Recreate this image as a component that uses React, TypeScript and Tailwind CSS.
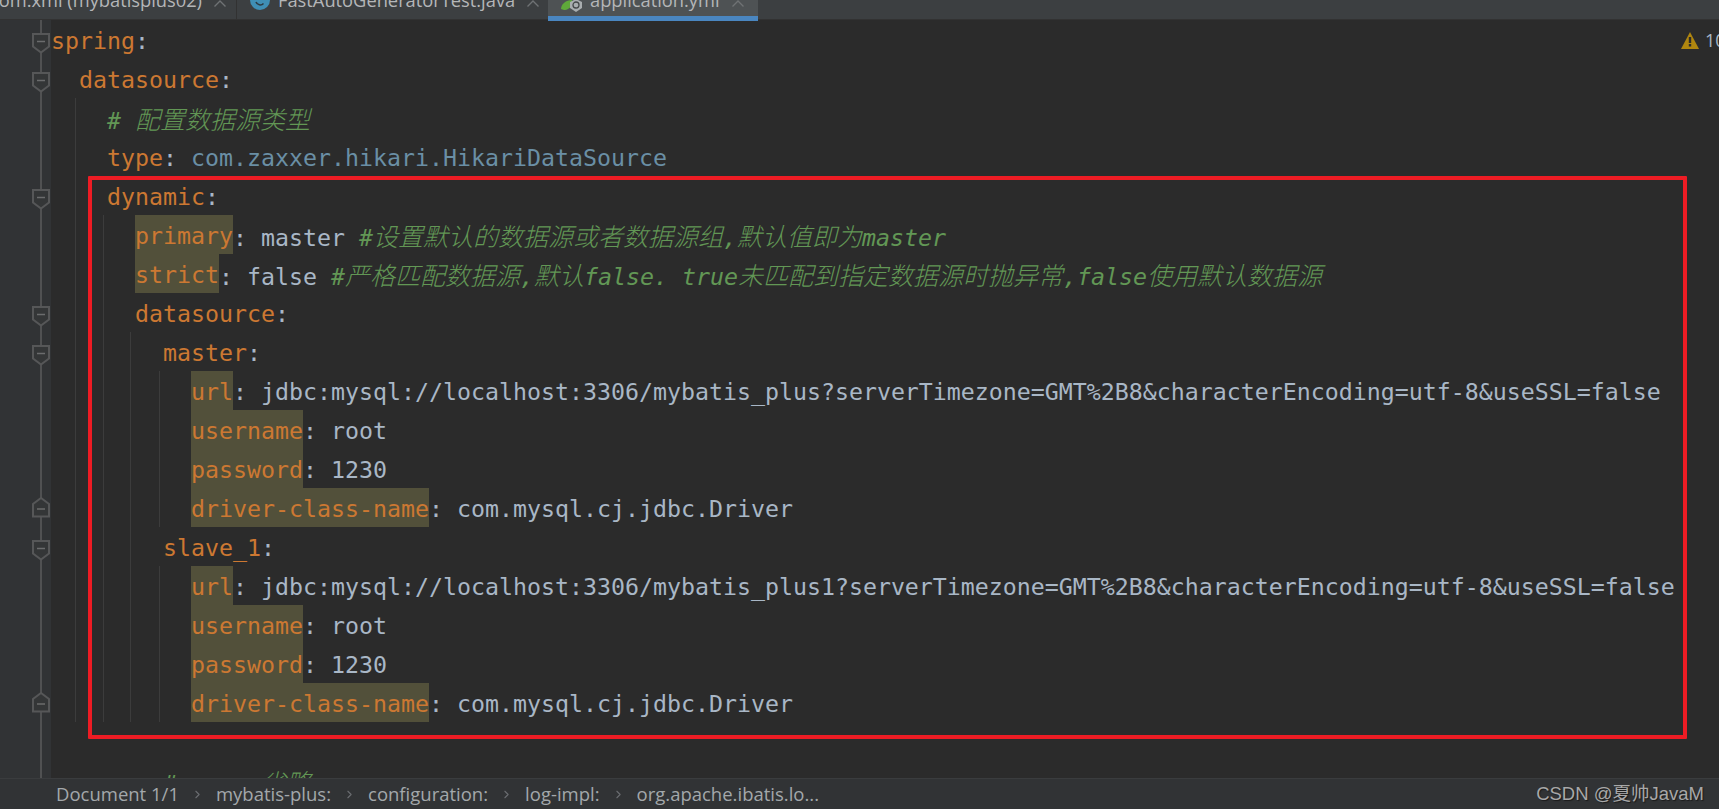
import type { ReactNode } from "react";
import { ChevronRight } from "lucide-react";

const Key = ({ children }: { children: ReactNode }) => <span className="text-[#cc7832]">{children}</span>;

const Mark = ({ children }: { children: ReactNode }) => (
  <span className="inline-block h-[39px] bg-[#52503a] align-top text-[#cc7832]">{children}</span>
);

const Val = ({ children }: { children: ReactNode }) => <span className="text-[#a9b7c6]">{children}</span>;

// comment text: latin stays on the 14px grid, CJK glyphs are 25px wide
const Note = ({ children }: { children: ReactNode }) => <span className="italic text-[#629755]">{children}</span>;
const Cjk = ({ children }: { children: ReactNode }) => (
  <span className="text-[25px] font-light [font-family:'Noto_Sans_CJK_SC',sans-serif]">{children}</span>
);

type Row = { fold?: "down" | "up"; code: ReactNode };

const rows: Row[] = [
  { fold: "down", code: <><Key>spring</Key><Val>:</Val></> },
  { fold: "down", code: <><Key>{"  datasource"}</Key><Val>:</Val></> },
  { code: <Note>{"    # "}<Cjk>配置数据源类型</Cjk></Note> },
  {
    code: (
      <>
        <Key>{"    type"}</Key>
        <Val>: </Val>
        <span className="text-[#6a8fa5]">com.zaxxer.hikari.HikariDataSource</span>
      </>
    ),
  },
  { fold: "down", code: <><Key>{"    dynamic"}</Key><Val>:</Val></> },
  {
    code: (
      <>
        {"      "}<Mark>primary</Mark><Val>: master </Val>
        <Note>#<Cjk>设置默认的数据源或者数据源组</Cjk>,<Cjk>默认值即为</Cjk>master</Note>
      </>
    ),
  },
  {
    code: (
      <>
        {"      "}<Mark>strict</Mark><Val>: false </Val>
        <Note>
          #<Cjk>严格匹配数据源</Cjk>,<Cjk>默认</Cjk>false. true<Cjk>未匹配到指定数据源时抛异常</Cjk>,false<Cjk>使用默认数据源</Cjk>
        </Note>
      </>
    ),
  },
  { fold: "down", code: <><Key>{"      datasource"}</Key><Val>:</Val></> },
  { fold: "down", code: <><Key>{"        master"}</Key><Val>:</Val></> },
  {
    code: (
      <>
        {"          "}<Mark>url</Mark>
        <Val>: jdbc:mysql://localhost:3306/mybatis_plus?serverTimezone=GMT%2B8&amp;characterEncoding=utf-8&amp;useSSL=false</Val>
      </>
    ),
  },
  { code: <>{"          "}<Mark>username</Mark><Val>: root</Val></> },
  { code: <>{"          "}<Mark>password</Mark><Val>: 1230</Val></> },
  { fold: "up", code: <>{"          "}<Mark>driver-class-name</Mark><Val>: com.mysql.cj.jdbc.Driver</Val></> },
  { fold: "down", code: <><Key>{"        slave_1"}</Key><Val>:</Val></> },
  {
    code: (
      <>
        {"          "}<Mark>url</Mark>
        <Val>: jdbc:mysql://localhost:3306/mybatis_plus1?serverTimezone=GMT%2B8&amp;characterEncoding=utf-8&amp;useSSL=false</Val>
      </>
    ),
  },
  { code: <>{"          "}<Mark>username</Mark><Val>: root</Val></> },
  { code: <>{"          "}<Mark>password</Mark><Val>: 1230</Val></> },
  { fold: "up", code: <>{"          "}<Mark>driver-class-name</Mark><Val>: com.mysql.cj.jdbc.Driver</Val></> },
  { code: "" },
  { code: <Note>{"        #      "}<Cjk>省略</Cjk></Note> },
];

function FoldIcon({ dir }: { dir: "down" | "up" }) {
  return (
    <svg width="18" height="21" viewBox="0 0 18 21" className={dir === "up" ? "mt-[9px]" : "mt-[13px]"}>
      <path
        d={dir === "down" ? "M1 1H17V13.5L9 19.5L1 13.5Z" : "M1 19.5H17V7L9 1L1 7Z"}
        fill="#343637"
        stroke="#565758"
        strokeWidth="2"
      />
      <path d={dir === "down" ? "M5 8.5H13" : "M5 12H13"} stroke="#6b6c6d" strokeWidth="1.5" />
    </svg>
  );
}

function TabClose() {
  return (
    <svg width="12" height="7" viewBox="0 0 12 7" className="shrink-0">
      <path d="M0.5 6.5L6 1L11.5 6.5" fill="none" stroke="#6f7274" strokeWidth="1.4" />
    </svg>
  );
}

function ClassIcon() {
  return (
    <svg width="20" height="10" viewBox="0 0 20 10" className="shrink-0">
      <circle cx="10" cy="0" r="10" fill="#3f8fb5" />
      <path d="M13.5 3.5A4.5 4.5 0 0 1 6 2" fill="none" stroke="#2d3b44" strokeWidth="1.6" />
    </svg>
  );
}

function SpringIcon() {
  return (
    <svg width="24" height="13" viewBox="0 0 24 13" className="shrink-0">
      <path d="M1 9C1 4 6 0 12 0V4C11 8 7 10 4 10Z" fill="#5fa83a" />
      <path d="M16 -1L22 2V8L16 12L10 8V2Z" fill="#a9adaf" />
      <circle cx="16" cy="5" r="3" fill="none" stroke="#45484a" strokeWidth="1.3" />
    </svg>
  );
}

const crumbs = ["mybatis-plus:", "configuration:", "log-impl:", "org.apache.ibatis.lo..."];

export default function App() {
  return (
    <div className="flex h-[809px] w-[1719px] flex-col overflow-hidden bg-[#2b2b2b] [font-family:'Open_Sans',sans-serif]">
      {/* tab strip, cut off by the top of the screenshot */}
      <div className="relative z-10 flex h-5 shrink-0 border-b border-[#323232] bg-[#3c3f41] text-[18.3px] leading-[24px] text-[#b4b6b8]">
        <div className="flex h-[19px] w-[237px] items-start justify-end gap-[12px] overflow-hidden border-r border-[#323232] pr-[10px]">
          <span className="-mt-[12px] whitespace-nowrap">pom.xml (mybatisplus02)</span>
          <TabClose />
        </div>
        <div className="flex h-[19px] w-[311px] items-start overflow-hidden pl-[13px]">
          <ClassIcon />
          <span className="-mt-[12px] ml-[8px] whitespace-nowrap">FastAutoGeneratorTest.java</span>
          <span className="ml-[12px]"><TabClose /></span>
        </div>
        <div className="flex h-[21px] w-[210px] items-start overflow-hidden border-b-[5px] border-[#4a86c0] bg-[#4e5254] pl-[12px]">
          <SpringIcon />
          <span className="-mt-[12px] ml-[6px] whitespace-nowrap">application.yml</span>
          <span className="ml-[12px]"><TabClose /></span>
        </div>
      </div>

      <div className="relative flex min-h-0 flex-1 overflow-hidden">
        <div className="relative w-[51px] shrink-0 bg-[#313335]">
          <div className="absolute inset-y-0 left-[40px] w-[2px] bg-[#505152]" />
          {rows.map((row, i) => (
            <div key={i} className="relative flex h-[39px] items-start pl-[32px]">
              {row.fold && <FoldIcon dir={row.fold} />}
            </div>
          ))}
        </div>

        <div className="min-w-0 flex-1 whitespace-pre text-[23.25px] leading-[41px] [font-family:'DejaVu_Sans_Mono',monospace]">
          {rows.map((row, i) => (
            <div key={i} className="h-[39px]">{row.code}</div>
          ))}
        </div>

        {/* indent guides */}
        <div className="absolute left-[75px] top-[78px] h-[624px] w-[1px] bg-[#3c3c3c]" />
        <div className="absolute left-[103px] top-[195px] h-[507px] w-[1px] bg-[#3c3c3c]" />
        <div className="absolute left-[130px] top-[312px] h-[390px] w-[1px] bg-[#3c3c3c]" />
        <div className="absolute left-[159px] top-[351px] h-[156px] w-[1px] bg-[#3c3c3c]" />
        <div className="absolute left-[159px] top-[546px] h-[156px] w-[1px] bg-[#3c3c3c]" />

        {/* red annotation box */}
        <div className="absolute left-[88px] top-[156px] h-[563px] w-[1599px] rounded-[1px] border-4 border-[#ed1c24]" />

        <div className="absolute left-[1681px] top-[11px] flex items-center gap-[6px] text-[18px] leading-[18px] text-[#a9b7c6]">
          <svg width="18" height="17" viewBox="0 0 18 17" className="shrink-0">
            <path d="M9 0L18 17H0Z" fill="#b0860f" />
            <rect x="7.8" y="5" width="2.4" height="6" fill="#2b2b2b" />
            <rect x="7.8" y="12" width="2.4" height="2.5" fill="#2b2b2b" />
          </svg>
          <span>10</span>
        </div>
      </div>

      <div className="flex h-[31px] shrink-0 items-center justify-between border-t border-[#3a3c3e] bg-[#313335] pl-[56px] pr-[15px] text-[18.5px] text-[#a3a8ab]">
        <div className="flex items-center">
          <span className="whitespace-nowrap">Document 1/1</span>
          {crumbs.map((crumb) => (
            <span key={crumb} className="flex items-center whitespace-nowrap">
              <ChevronRight className="mx-[12px] h-[13px] w-[13px] text-[#6a6d70]" />
              {crumb}
            </span>
          ))}
        </div>
        <span className="whitespace-nowrap text-[18.5px] text-[#a8a8a8] [font-family:'Liberation_Sans','Noto_Sans_CJK_SC',sans-serif] [text-shadow:1px_1px_1px_#1a1a1a]">
          CSDN @夏帅JavaM
        </span>
      </div>
    </div>
  );
}
